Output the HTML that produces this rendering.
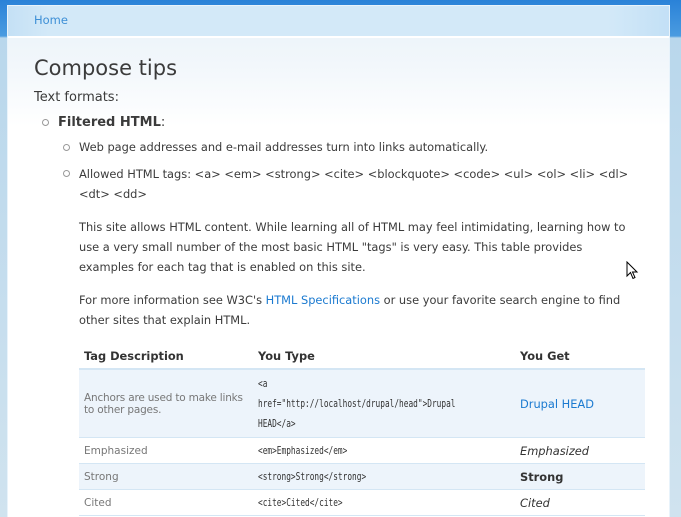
<!DOCTYPE html>
<html style="height:517px;overflow:hidden"><head><style>
body{margin:0;width:681px;height:517px;overflow:hidden;background:linear-gradient(#2a82d8 0,#4a9be0 36px,#b9d7ec 38px,#d0e3ef 517px);font-family:"DejaVu Sans","Liberation Sans",sans-serif;color:#3b3b3b;position:relative}
#panel{position:absolute;left:7px;top:5px;width:661px;height:512px;overflow:hidden;border:1px solid #e8f3fb;border-bottom:0;background:linear-gradient(#e9f2f9 0,#f2f7fb 60px,#fff 120px)}
#bc{height:30px;background:linear-gradient(90deg,#c4e0f5 0,#d3e9f8 40px,#d3e9f8 600px,#c3e0f6 660px);border-bottom:2px solid #fff;font-size:11.5px;color:#3d8fd6;padding-left:26px;line-height:28px}
h1{position:absolute;left:26px;top:50px;margin:0;font-weight:normal;font-size:21px;color:#3b3b3b}
.p{position:absolute;font-size:11.4px;line-height:20px;color:#3b3b3b}
.b{position:absolute;width:5px;height:5px;border:1px solid #999;border-radius:50%}
a{color:#1b7ad0;text-decoration:none}
table{position:absolute;left:71px;top:337px;width:566px;border-collapse:collapse;font-size:10.5px;table-layout:fixed}
th{text-align:left;font-size:11.4px;font-weight:bold;color:#333;padding:5px 5px;height:15px;border-bottom:2px solid #d4e6f4}
td{padding:0 5px;color:#777;border-bottom:1px solid #d4e6f4;height:25px;vertical-align:middle}
tr.o td{background:#edf4fb}
.m{font-family:"DejaVu Sans Mono",monospace;font-size:11px;color:#333;line-height:20px;white-space:nowrap;overflow:visible}
.m span{display:inline-block;transform:scaleX(0.71);transform-origin:left center}
.g{font-size:11.4px;color:#333}
</style></head><body>
<div id="panel">
<div id="bc">Home</div>
<h1>Compose tips</h1>
<div class="p" style="left:26px;top:82px;font-size:13px">Text formats:</div>
<div class="b" style="left:34px;top:113px"></div>
<div class="p" style="left:50px;top:107px;font-size:13px"><b>Filtered HTML</b>:</div>
<div class="b" style="left:55px;top:138px"></div>
<div class="p" style="left:71px;top:131px">Web page addresses and e-mail addresses turn into links automatically.</div>
<div class="b" style="left:55px;top:164px"></div>
<div class="p" style="left:71px;top:158px;width:570px">Allowed HTML tags: &lt;a&gt; &lt;em&gt; &lt;strong&gt; &lt;cite&gt; &lt;blockquote&gt; &lt;code&gt; &lt;ul&gt; &lt;ol&gt; &lt;li&gt; &lt;dl&gt;<br>&lt;dt&gt; &lt;dd&gt;</div>
<div class="p" style="left:71px;top:211px;width:560px">This site allows HTML content. While learning all of HTML may feel intimidating, learning how to<br>use a very small number of the most basic HTML "tags" is very easy. This table provides<br>examples for each tag that is enabled on this site.</div>
<div class="p" style="left:71px;top:284px;width:570px">For more information see W3C's <a>HTML Specifications</a> or use your favorite search engine to find<br>other sites that explain HTML.</div>
<table>
<colgroup><col style="width:174px"><col style="width:262px"><col></colgroup>
<tr><th>Tag Description</th><th>You Type</th><th>You Get</th></tr>
<tr class="o"><td style="height:67px;white-space:nowrap;letter-spacing:-0.2px">Anchors are used to make links<br>to other pages.</td><td class="m"><span>&lt;a</span><br><span>href="http://localhost/drupal/head"&gt;Drupal</span><br><span>HEAD&lt;/a&gt;</span></td><td class="g"><a>Drupal HEAD</a></td></tr>
<tr><td>Emphasized</td><td class="m"><span>&lt;em&gt;Emphasized&lt;/em&gt;</span></td><td class="g"><i>Emphasized</i></td></tr>
<tr class="o"><td>Strong</td><td class="m"><span>&lt;strong&gt;Strong&lt;/strong&gt;</span></td><td class="g"><b>Strong</b></td></tr>
<tr><td>Cited</td><td class="m"><span>&lt;cite&gt;Cited&lt;/cite&gt;</span></td><td class="g"><i>Cited</i></td></tr>
</table>
</div>
<svg style="position:absolute;left:626px;top:261px" width="13" height="20" viewBox="0 0 13 20"><path d="M1 1 L1 15 L4.5 11.5 L7 17.5 L9 16.5 L6.5 11 L11 11 Z" fill="#fff" stroke="#000" stroke-width="1"/></svg>
</body></html>
